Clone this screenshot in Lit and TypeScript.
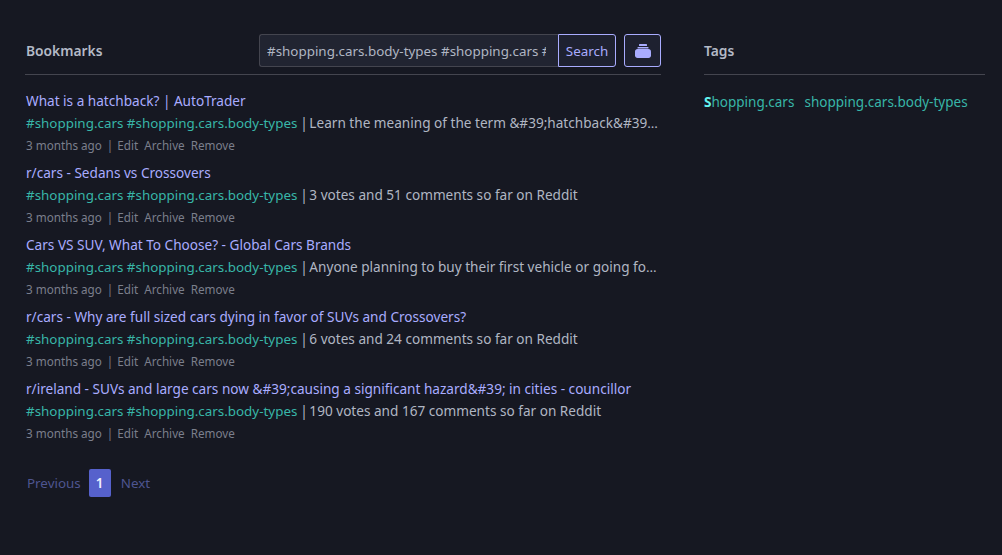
import { LitElement, html, css, svg } from 'lit';
import { customElement } from 'lit/decorators.js';

interface Bookmark {
  title: string;
  description: string;
}

const BOOKMARKS: Bookmark[] = [
  {
    title: 'What is a hatchback? | AutoTrader',
    description: 'Learn the meaning of the term &#39;hatchback&#39;, and find out what makes this type of car so popular with buyers',
  },
  { title: 'r/cars - Sedans vs Crossovers', description: '3 votes and 51 comments so far on Reddit' },
  {
    title: 'Cars VS SUV, What To Choose? - Global Cars Brands',
    description: 'Anyone planning to buy their first vehicle or going for another one will have to choose',
  },
  {
    title: 'r/cars - Why are full sized cars dying in favor of SUVs and Crossovers?',
    description: '6 votes and 24 comments so far on Reddit',
  },
  {
    title: 'r/ireland - SUVs and large cars now &#39;causing a significant hazard&#39; in cities - councillor',
    description: '190 votes and 167 comments so far on Reddit',
  },
];

const archiveIcon = svg`<rect x="4" y="0" width="8" height="2" rx="0.6"/><rect x="2.500" y="3" width="11" height="1.500" rx="0.5"/><path d="M2.500 5h11c1.400 0 2.500 1.100 2.500 2.500v4c0 1.400-1.100 2.500-2.500 2.500h-11C1.100 14 0 12.900 0 11.500v-4C0 6.100 1.100 5 2.500 5z"/>`;

@customElement('app-root')
export class AppRoot extends LitElement {
  static styles = css`
    :host {
      display: block;
      min-height: 555px;
      background: #161822;
      color: #b0b6c3;
      font-family: 'Noto Sans', 'Open Sans', sans-serif;
      font-size: 13.4px;
    }

    .page {
      display: grid;
      grid-template-columns: 636px 281px;
      column-gap: 43px;
      padding: 34px 0 0 25px;
    }

    .section-header {
      display: flex;
      align-items: center;
      justify-content: space-between;
      height: 33px;
      padding-bottom: 7px;
      border-bottom: 1px solid #44454f;
      margin-bottom: 15px;
    }

    h2 {
      margin: 0;
      font-size: 13.8px;
      font-weight: 600;
      color: #b4bac7;
      padding-left: 1px;
    }

    aside h2 {
      padding-left: 0;
    }

    .search {
      display: flex;
      align-items: center;
    }

    .search input {
      box-sizing: border-box;
      width: 299px;
      height: 33px;
      padding: 0 12px 0 7px;
      font: inherit;
      color: #b0b6c3;
      background: #212431;
      border: 1px solid #44454f;
      border-right: none;
      border-radius: 3px 0 0 3px;
      outline: none;
    }

    button {
      box-sizing: border-box;
      height: 33px;
      font: inherit;
      color: #a9acff;
      background: #1e2130;
      border: 1px solid #a9acff;
      padding: 0;
    }

    .search-btn {
      width: 58px;
      border-radius: 0 3px 3px 0;
    }

    .icon-btn {
      display: flex;
      align-items: center;
      justify-content: center;
      width: 37px;
      margin-left: 8px;
      border-radius: 3px;
    }

    .icon-btn svg {
      width: 16px;
      height: 14px;
      fill: #a9acff;
    }

    ul {
      list-style: none;
      margin: 0;
      padding: 0;
    }

    li {
      margin-bottom: 6px;
    }

    .line {
      height: 22px;
      line-height: 22px;
      white-space: nowrap;
      overflow: hidden;
      text-overflow: ellipsis;
      padding: 0 1px;
    }

    .title {
      color: #a9acff;
      font-size: 13.6px;
    }

    .tag {
      color: #38b6a8;
    }

    .sep {
      margin: 0 1.5px 0 3px;
      font-size: 13.6px;
    }

    .desc {
      font-size: 13.6px;
    }

    .meta {
      font-size: 11.7px;
      line-height: 23px;
      color: #7b7f8c;
    }

    .meta .bar {
      margin: 0 4px 0 5px;
    }

    .meta .action {
      margin-right: 6px;
    }

    .pagination {
      display: flex;
      align-items: center;
      gap: 8px;
      margin-top: 25px;
      padding-left: 2px;
      color: #4e5590;
    }

    .current {
      box-sizing: border-box;
      width: 22px;
      height: 28px;
      line-height: 28px;
      text-align: center;
      border-radius: 2px;
      background: #5661cc;
      color: #f2f2ff;
      font-weight: 600;
    }

    .next {
      margin-left: 2px;
    }

    .tags {
      display: flex;
      gap: 10px;
      font-size: 13.5px;
      line-height: 24px;
      color: #38b6a8;
    }

    .tags b {
      color: #63f3ee;
      font-weight: 700;
    }
  `;

  renderBookmark(b: Bookmark) {
    return html`<li>
      <div class="line title">${b.title}</div>
      <div class="line">
        <span class="tag">#shopping.cars #shopping.cars.body-types</span><span class="sep">|</span><span class="desc"
          >${b.description}</span
        >
      </div>
      <div class="line meta">
        <span>3 months ago</span><span class="bar">|</span><span class="action">Edit</span
        ><span class="action">Archive</span><span>Remove</span>
      </div>
    </li>`;
  }

  render() {
    return html`<div class="page">
      <main>
        <div class="section-header">
          <h2>Bookmarks</h2>
          <div class="search">
            <input type="text" .value=${'#shopping.cars.body-types #shopping.cars #shopping.cars'} />
            <button class="search-btn">Search</button>
            <button class="icon-btn">
              <svg viewBox="0 0 16 14">${archiveIcon}</svg>
            </button>
          </div>
        </div>
        <ul>
          ${BOOKMARKS.map((b) => this.renderBookmark(b))}
        </ul>
        <div class="pagination">
          <span>Previous</span>
          <span class="current">1</span>
          <span class="next">Next</span>
        </div>
      </main>
      <aside>
        <div class="section-header"><h2>Tags</h2></div>
        <div class="tags">
          <span><b>S</b>hopping.cars</span>
          <span>shopping.cars.body-types</span>
        </div>
      </aside>
    </div>`;
  }
}
